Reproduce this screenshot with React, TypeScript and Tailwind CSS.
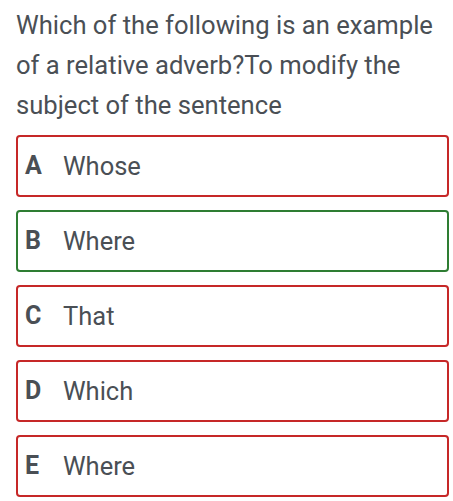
const options = [
  { key: 'A', label: 'Whose', correct: false },
  { key: 'B', label: 'Where', correct: true },
  { key: 'C', label: 'That', correct: false },
  { key: 'D', label: 'Which', correct: false },
  { key: 'E', label: 'Where', correct: false },
];

export default function App() {
  return (
    <div
      className="min-h-screen bg-white pl-4 pr-[4px] pt-[5px] text-[#4a4f55]"
      style={{ fontFamily: 'Roboto, "Noto Sans", sans-serif' }}
    >
      <p className="pr-3 text-[25.6px] leading-[40px]">
        Which of the following is an example of a relative adverb?To modify the subject of the sentence
      </p>
      <div className="mt-[10px] flex flex-col gap-[13px]">
        {options.map((o) => (
          <div
            key={o.key}
            className={`flex h-[62px] items-center rounded-[4px] border-2 pl-[7px] ${
              o.correct ? 'border-[#2e7d32]' : 'border-[#c62828]'
            }`}
          >
            <span className="w-[38px] text-[25px] font-bold">{o.key}</span>
            <span className="text-[25.5px]">{o.label}</span>
          </div>
        ))}
      </div>
    </div>
  );
}
